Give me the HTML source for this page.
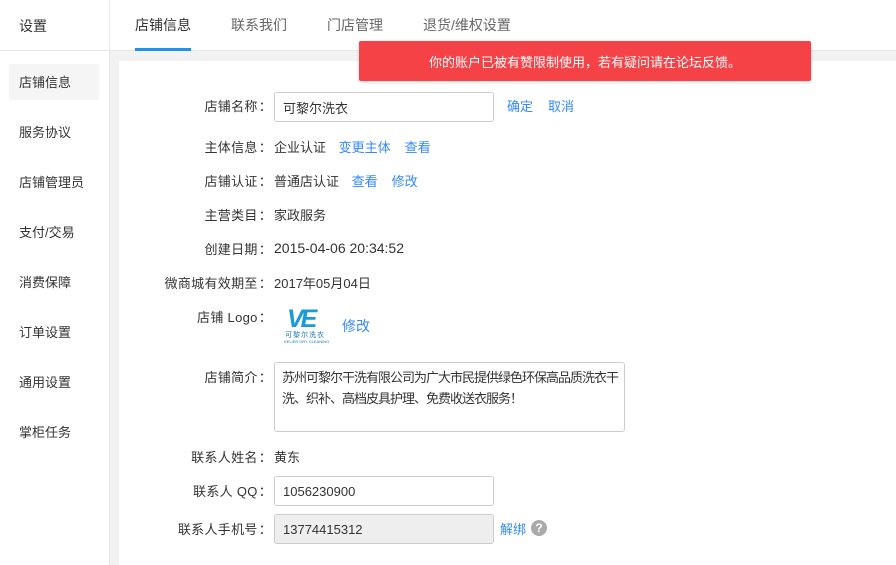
<!DOCTYPE html>
<html><head><meta charset="utf-8"><style>
*{margin:0;padding:0;box-sizing:border-box}
body{width:896px;height:565px;overflow:hidden;background:#f2f2f2;font-family:"Liberation Sans","Noto Sans CJK SC",sans-serif;font-size:13px;color:#333;position:relative}
.a{position:absolute;white-space:nowrap}
.side{position:absolute;left:0;top:0;width:110px;height:565px;background:#fff;border-right:1px solid #e8e8e8}
.top{position:absolute;left:110px;top:0;width:786px;height:51px;background:#fff;border-bottom:1px solid #e8e8e8}
.card{position:absolute;left:119px;top:61px;width:777px;height:504px;background:#fff}
.lab{position:absolute;right:624px;text-align:right;white-space:nowrap;font-size:13px;color:#333;letter-spacing:0.3px}
.c{font-family:"Noto Sans CJK SC",sans-serif;margin-left:1px}
.b{color:#38f}
.inp{position:absolute;border:1px solid #ccc;border-radius:3px;background:#fff;padding-left:8px;font-size:13px;color:#333;display:flex;align-items:center}
.nav{position:absolute;left:19px;font-size:13px;color:#333}
</style></head><body>
<div class="side">
<div class="a" style="left:19px;top:16px;font-size:14px">设置</div>
<div style="position:absolute;left:0;top:50px;width:109px;border-top:1px solid #e8e8e8"></div>
<div style="position:absolute;left:9px;top:64px;width:90px;height:36px;background:#f5f5f5;border-radius:2px"></div>
<div class="nav" style="top:72px">店铺信息</div>
<div class="nav" style="top:122px">服务协议</div>
<div class="nav" style="top:172px">店铺管理员</div>
<div class="nav" style="top:222px">支付/交易</div>
<div class="nav" style="top:272px">消费保障</div>
<div class="nav" style="top:322px">订单设置</div>
<div class="nav" style="top:372px">通用设置</div>
<div class="nav" style="top:422px">掌柜任务</div>
</div>
<div class="top">
<div class="a" style="left:25px;top:15px;font-size:14px;color:#333">店铺信息</div>
<div style="position:absolute;left:25px;top:48px;width:56px;height:3px;background:#1e90f0"></div>
<div class="a" style="left:121px;top:15px;font-size:14px;color:#666">联系我们</div>
<div class="a" style="left:217px;top:15px;font-size:14px;color:#666">门店管理</div>
<div class="a" style="left:313px;top:15px;font-size:14px;color:#666">退货/维权设置</div>
</div>
<div class="card"></div>
<div style="position:absolute;left:359px;top:41px;width:452px;height:40px;background:#f44246;border-radius:2px;color:#fff;font-size:13px;display:flex;align-items:center;justify-content:center;box-shadow:0 1px 3px rgba(0,0,0,.2)">你的账户已被有赞限制使用，若有疑问请在论坛反馈。</div>

<div class="lab" style="top:96px">店铺名称<span class="c">：</span></div>
<div class="inp" style="left:274px;top:92px;width:220px;height:30px">可黎尔洗衣</div>
<div class="a b" style="left:507px;top:96px">确定</div>
<div class="a b" style="left:548px;top:96px">取消</div>

<div class="lab" style="top:137px">主体信息<span class="c">：</span></div>
<div class="a" style="left:274px;top:137px">企业认证 <span class="b" style="margin-left:9px">变更主体</span><span class="b" style="margin-left:14px">查看</span></div>
<div class="lab" style="top:171px">店铺认证<span class="c">：</span></div>
<div class="a" style="left:274px;top:171px">普通店认证 <span class="b" style="margin-left:9px">查看</span><span class="b" style="margin-left:14px">修改</span></div>
<div class="lab" style="top:205px">主营类目<span class="c">：</span></div>
<div class="a" style="left:274px;top:205px">家政服务</div>
<div class="lab" style="top:239px">创建日期<span class="c">：</span></div>
<div class="a" style="left:274px;top:240px;font-size:14px">2015-04-06 20:34:52</div>
<div class="lab" style="top:273px">微商城有效期至<span class="c">：</span></div>
<div class="a" style="left:274px;top:273px">2017年05月04日</div>
<div class="lab" style="top:307px">店铺 Logo<span class="c">：</span></div>
<div class="a" style="left:287px;top:305px;font:italic bold 25px 'Liberation Sans',sans-serif;color:#1a9ad6;letter-spacing:-3px">VE</div>
<div class="a" style="left:285px;top:330px;font-size:7px;color:#1a7ab0;letter-spacing:1px">可黎尔洗衣</div>
<div class="a" style="left:284px;top:339px;font-size:4px;color:#1a7ab0">KELIER DRY CLEANING</div>
<div class="a b" style="left:342px;top:316px;font-size:14px">修改</div>
<div class="lab" style="top:367px">店铺简介<span class="c">：</span></div>
<div class="inp" style="left:274px;top:362px;width:351px;height:70px;padding:4px 0 4px 7px;white-space:nowrap;overflow:hidden;line-height:21px;font-size:13px;letter-spacing:-1px;display:block">苏州可黎尔干洗有限公司为广大市民提供绿色环保高品质洗衣干<br>洗、织补、高档皮具护理、免费收送衣服务！</div>
<div class="lab" style="top:447px">联系人姓名<span class="c">：</span></div>
<div class="a" style="left:274px;top:447px">黄东</div>
<div class="lab" style="top:481px">联系人 QQ<span class="c">：</span></div>
<div class="inp" style="left:274px;top:476px;width:220px;height:30px">1056230900</div>
<div class="lab" style="top:519px">联系人手机号<span class="c">：</span></div>
<div class="inp" style="left:274px;top:514px;width:220px;height:30px;background:#eee">13774415312</div>
<div class="a b" style="left:500px;top:519px">解绑</div>
<div class="a" style="left:531px;top:520px;width:16px;height:16px;border-radius:50%;background:#aaa;color:#fff;font-size:12px;font-weight:bold;text-align:center;line-height:16px">?</div>
</body></html>
